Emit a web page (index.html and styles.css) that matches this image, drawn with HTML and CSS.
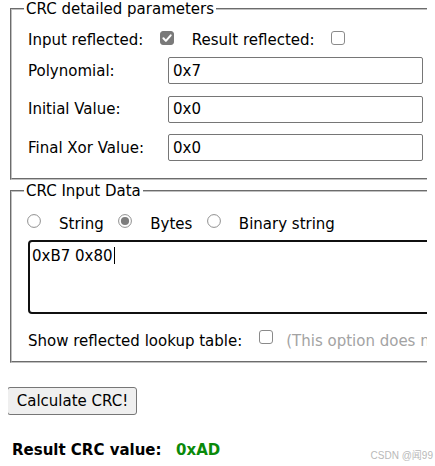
FILE: index.html
```html
<!DOCTYPE html>
<html lang="en">
<head>
<meta charset="utf-8">
<title>CRC Calculator</title>
<link rel="stylesheet" href="styles.css">
</head>
<body>
<div class="page">
  <fieldset class="box box-params">
    <legend>CRC detailed parameters</legend>
    <div class="inner">
      <div class="check-row">
        <span class="lbl">Input reflected:</span>
        <span class="cb cb-first"><svg width="14" height="14" viewBox="0 0 14 14"><rect x="0.5" y="0.5" width="13" height="13" rx="2.5" fill="#7a7a7a" stroke="#7a7a7a"/><path d="M3.4 7.3 L5.9 9.9 L10.7 4.3" fill="none" stroke="#fff" stroke-width="2" stroke-linecap="round" stroke-linejoin="round"/></svg></span>
        <span class="lbl">Result reflected:</span>
        <span class="cb cb-last"><svg width="14" height="14" viewBox="0 0 14 14"><rect x="0.5" y="0.5" width="13" height="13" rx="2.5" fill="#fff" stroke="#8a8a8a"/></svg></span>
      </div>
      <div class="param-grid">
        <label class="lbl">Polynomial:</label>
        <input class="field" type="text" value="0x7">
        <label class="lbl">Initial Value:</label>
        <input class="field" type="text" value="0x0">
        <label class="lbl">Final Xor Value:</label>
        <input class="field" type="text" value="0x0">
      </div>
    </div>
  </fieldset>

  <fieldset class="box box-input">
    <legend>CRC Input Data</legend>
    <div class="inner inner-input">
      <div class="radio-row">
        <span class="rd"><svg width="14" height="14" viewBox="0 0 14 14"><circle cx="7" cy="7" r="6.4" fill="#fff" stroke="#8f8f8f"/></svg></span>
        <span class="opt">String</span>
        <span class="rd"><svg width="14" height="14" viewBox="0 0 14 14"><circle cx="7" cy="7" r="6.4" fill="#fff" stroke="#8f8f8f"/><circle cx="7" cy="7" r="4.1" fill="#7d7d7d"/></svg></span>
        <span class="opt">Bytes</span>
        <span class="rd"><svg width="14" height="14" viewBox="0 0 14 14"><circle cx="7" cy="7" r="6.4" fill="#fff" stroke="#8f8f8f"/></svg></span>
        <span class="opt">Binary string</span>
      </div>
      <div class="textarea">0xB7 0x80<span class="caret"></span></div>
      <div class="lookup-row">
        <span class="lbl">Show reflected lookup table:</span>
        <span class="cb cb-lookup"><svg width="14" height="14" viewBox="0 0 14 14"><rect x="0.5" y="0.5" width="13" height="13" rx="2.5" fill="#fff" stroke="#8a8a8a"/></svg></span>
        <span class="note">(This option does not affect the CRC calculation, only the displayed table)</span>
      </div>
    </div>
  </fieldset>

  <button class="calc" type="button">Calculate CRC!</button>

  <div class="result">
    <span class="result-label">Result CRC value:</span>
    <span class="result-value">0xAD</span>
  </div>
</div>
<div class="watermark">CSDN @闻99</div>
</body>
</html>
```

FILE: styles.css
```css
html {
  overflow: hidden;
  background: #fff;
}

body {
  margin: 0 8px;
  font-family: "DejaVu Sans", Verdana, sans-serif;
  font-size: 15px;
  color: #000;
}

.page {
  width: 640px;
}

.box {
  margin: 0 2px;
  padding: 0 12px;
  border: 2px groove #c0c0c0;
}

.box legend {
  padding: 0 2px;
  line-height: 18px;
}

.box-params {
  padding-bottom: 17px;
}

.box-input {
  margin-top: 2px;
  padding-bottom: 10.5px;
}

.inner {
  padding-left: 4px;
}

.inner-input {
  padding-left: 3px;
}

.lbl {
  white-space: nowrap;
}

.check-row {
  display: flex;
  align-items: flex-start;
  margin-top: 13.3px;
}

.cb,
.rd {
  display: block;
  width: 14px;
  height: 14px;
  flex: none;
}

.cb svg,
.rd svg {
  display: block;
}

.cb-first {
  margin: -0.6px 18px 0 16.5px;
}

.cb-last {
  margin: -0.6px 0 0 16px;
}

.param-grid {
  display: grid;
  grid-template-columns: 140px 255px;
  grid-auto-rows: 27px;
  row-gap: 11.5px;
  align-items: center;
  margin-top: 8.2px;
}

.field {
  box-sizing: border-box;
  width: 255px;
  height: 27px;
  margin: 0;
  padding: 0 4px;
  border: 1px solid #767676;
  border-radius: 2px;
  font: 15px "DejaVu Sans", Verdana, sans-serif;
  color: #000;
  background: #fff;
}

.radio-row {
  display: flex;
  align-items: flex-start;
  margin-top: 14.6px;
}

.rd {
  margin-top: -1.3px;
  margin-right: 18px;
}

.opt {
  margin-right: 14.5px;
}

.textarea {
  box-sizing: border-box;
  width: 560px;
  height: 74px;
  margin: 7px 0 0 1px;
  padding: 5px 2px;
  border: 2px solid #101010;
  border-radius: 4px;
  white-space: nowrap;
}

.caret {
  display: inline-block;
  width: 1px;
  height: 17px;
  margin-left: 1px;
  vertical-align: -3px;
  background: #000;
}

.lookup-row {
  display: flex;
  align-items: flex-start;
  margin: 18px 0 0 1px;
  white-space: nowrap;
}

.cb-lookup {
  margin: -2px 13px 0 17px;
}

.note {
  color: #a3a3a3;
}

.calc {
  display: block;
  box-sizing: border-box;
  width: 130px;
  height: 28px;
  margin: 24px 0 0 -1px;
  padding: 0 0 0 1px;
  border: 1px solid #767676;
  border-radius: 3px;
  background: #efefef;
  font: 15px "DejaVu Sans", Verdana, sans-serif;
  color: #000;
}

.result {
  display: flex;
  margin: 26px 0 0 4px;
  font-weight: bold;
}

.result-value {
  margin-left: 14.5px;
  color: #0a8a0a;
}

.watermark {
  position: absolute;
  right: 2px;
  top: 447px;
  font-family: "Liberation Sans", Arial, "Noto Sans CJK SC", sans-serif;
  font-size: 10px;
  color: #b9b9b9;
}
```
